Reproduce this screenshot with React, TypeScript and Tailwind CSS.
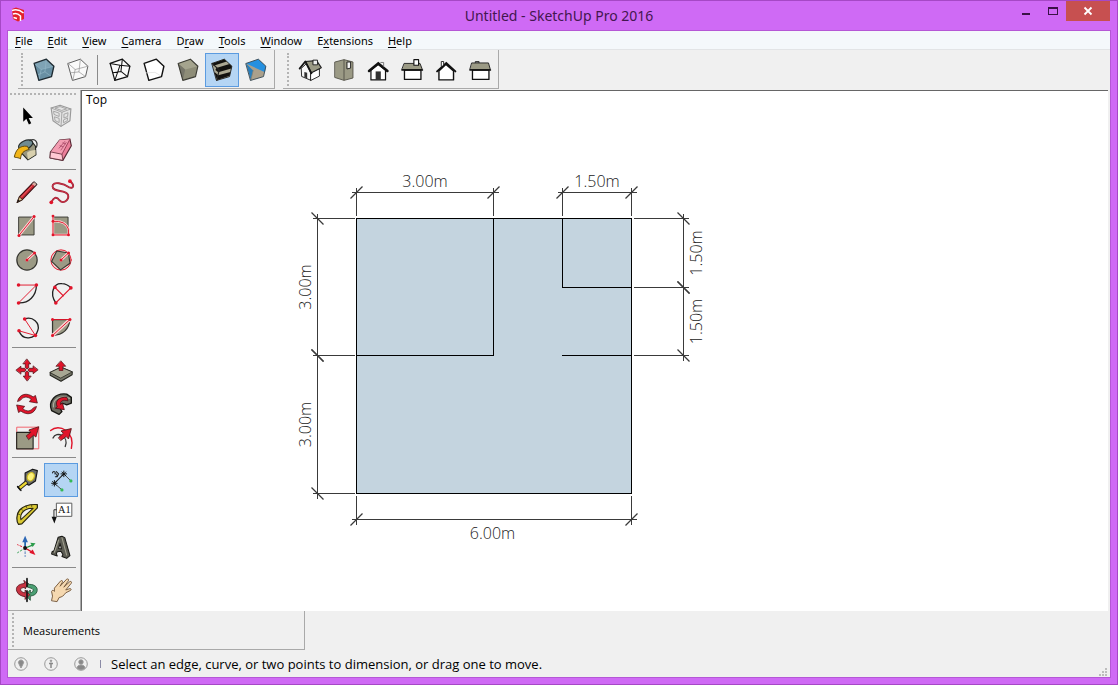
import React from "react";

const RED = "#e0142a";
const OLIVE = "#9b9a85";

function Svg({ children }: { children: React.ReactNode }) {
  return (
    <svg viewBox="0 0 34 34" className="size-full" fill="none" strokeLinejoin="round" strokeLinecap="round" aria-hidden="true">
      {children}
    </svg>
  );
}

function Tool({ label, active = false, children }: { label: string; active?: boolean; children: React.ReactNode }) {
  return (
    <button
      type="button"
      aria-label={label}
      aria-pressed={active}
      className={
        active
          ? "size-[34px] shrink-0 border border-[#5b9be0] bg-[#b5d5f4]"
          : "size-[34px] shrink-0 border border-transparent hover:bg-[#dcebf8]"
      }
    >
      <Svg>{children}</Svg>
    </button>
  );
}

const HULL = "M6.5 10 19.5 5.5 27.5 13 25 24 11.5 28Z";

function Dots({ points, r = 1.6 }: { points: number[][]; r?: number }) {
  return (
    <g fill={RED}>
      {points.map(([x, y]) => (
        <circle key={`${x}-${y}`} cx={x} cy={y} r={r} />
      ))}
    </g>
  );
}

const styleTools = {
  xray: (
    <>
      <path d={HULL} fill="#7fa3b5" />
      <path d="M6.5 10 14 16.500 27.500 13 25 24 11.500 28Z" fill="#688fa3" />
      <path d="M19.500 5.500 18 19 10.500 22M18 19l7 5M6.500 10 14 16.500 27.500 13M14 16.500 11.500 28" stroke="#93b5c5" strokeWidth="0.7" />
      <path d={HULL} stroke="#1e2a31" strokeWidth="1.4" />
    </>
  ),
  backEdges: (
    <>
      <path d={HULL} fill="#fafafa" stroke="#555" strokeWidth="1" />
      <path d="M6.500 10 14 16.500 27.500 13M14 16.500 11.500 28M19.500 5.500 18 19 9 20M18 19l7 5" stroke="#999" strokeWidth="0.8" />
    </>
  ),
  wireframe: (
    <>
      <path d={HULL} fill="#fafafa" stroke="#111" strokeWidth="1.300" />
      <path d="M6.500 10 17 12 27.500 13M17 12 11.500 28M19.500 5.500 18 18.500 9.500 20M18 18.500l7 5.500" stroke="#111" strokeWidth="1.100" />
    </>
  ),
  hidden: (
    <>
      <path d={HULL} fill="#fff" stroke="#111" strokeWidth="1.500" />
      <path d="M9 20 18 19.500 24 23" stroke="#ddd" strokeWidth="0.8" />
    </>
  ),
  shaded: (
    <>
      <path d={HULL} fill="#8e8d78" />
      <path d="M6.500 10 19.500 5.500 27.500 13 14 16.500Z" fill="#a5a48e" />
      <path d="M6.500 10 14 16.500 11.500 28Z" fill="#77766a" />
      <path d={HULL} stroke="#3d3d35" strokeWidth="1.200" />
    </>
  ),
  textured: (
    <>
      <path d={HULL} fill="#aaa792" />
      <path d="M6.500 10 19.500 5.500 22 8 8 12.500ZM11 15 25 10.500 27.500 13 26.800 15.500 13 19.500 10 17ZM9 19l4 3.500L26 19l-.8 4L12 27.500 10 23Z" fill="#12110f" />
      <path d="M6.500 10 14 17 11.500 28" stroke="#23221f" strokeWidth="1.200" />
      <path d={HULL} stroke="#23221f" strokeWidth="1" />
    </>
  ),
  mono: (
    <>
      <path d={HULL} fill="#aaa08c" />
      <path d="M6.500 10 19.500 5.500 27.500 13 26.500 19.500Z" fill="#2590e0" />
      <path d="M6.500 10 14 17.500 11.500 28Z" fill="#287fbe" />
      <path d="M14 17.500 11.500 28" stroke="#8b8270" strokeWidth="0.8" />
      <path d={HULL} stroke="#3b4d59" strokeWidth="1" />
    </>
  ),
};

const viewTools = {
  iso: (
    <>
      <path d="M8 15 13.500 10 18 21v7L8.500 24Z" fill="#f7f7f7" stroke="#222" />
      <path d="M18 20 27 15.500V23.500L18 28Z" fill="#fff" stroke="#222" />
      <path d="M12 8 24 7l5 7.500L18.500 20Z" fill={OLIVE} stroke="#222" strokeWidth="1.200" />
      <path d="M6 15.500 12 8l6.500 12.500" stroke="#151515" strokeWidth="1.900" />
      <path d="M20.500 6.500h4.500v5h-4.500z" fill="#eee" stroke="#222" />
      <path d="M11 19l3 1v6l-3-1.200z" fill="#333" />
    </>
  ),
  top: (
    <>
      <path d="M7.500 8.500 17 6l9.500 2.500v17L17 28l-9.500-3Z" fill={OLIVE} stroke="#55544a" />
      <path d="M17 6.500V27.500" stroke="#55544a" />
      <path d="M20.500 8.500h3.500v6.500l-3.500.8z" fill="#f4f4f4" stroke="#222" />
    </>
  ),
  front: (
    <>
      <path d="M9.500 17 17 11l8 6V27.500H9.500Z" fill="#fff" stroke="#111" strokeWidth="1.300" />
      <path d="M14.500 18.500h5.500V27.500h-5.500z" fill="#333" />
      <path d="M7.500 18 17.300 10 27 18" stroke="#111" strokeWidth="2.800" strokeLinejoin="miter" />
      <path d="M20 9h3v4" stroke="#777" />
    </>
  ),
  right: (
    <>
      <path d="M9 17h17.500v10H9z" fill="#fff" stroke="#111" strokeWidth="1.400" />
      <path d="M9 10h16.500L28 16.500H6.500Z" fill={OLIVE} stroke="#222" />
      <path d="M6.500 17H28" stroke="#111" strokeWidth="1.800" />
      <path d="M19 6h5v6h-5z" fill="#fff" stroke="#111" strokeWidth="1.200" />
    </>
  ),
  back: (
    <>
      <path d="M9.500 18 17 11l8 7V27.500H9.500Z" fill="#fff" stroke="#111" strokeWidth="1.500" />
      <path d="M7.500 18.500 17.300 9.500 27 18.500" stroke="#111" strokeWidth="2" strokeLinejoin="miter" />
      <path d="M12 13V8h2.500v3.500" fill="#fff" stroke="#222" />
    </>
  ),
  left: (
    <>
      <path d="M9 17h17.500v10H9z" fill="#fff" stroke="#111" strokeWidth="1.400" />
      <path d="M12 10V8h4v2" fill="#999" stroke="#333" />
      <path d="M8.500 9.500H26L28 16.500H6.500Z" fill={OLIVE} stroke="#222" />
      <path d="M6.500 17H28" stroke="#111" strokeWidth="1.800" />
    </>
  ),
};

const arrowUp = "M17 5.500l5 5.500h-3v4.500h-4V11h-3z";
const rotateArrow = "M7 14C9 6 17 4.500 23.500 9.500l2.500-1.500 2 8-8.500-1.500 2-2.500C17 8.500 13 9 10 13Z";
const freehandCurve = "M26.500 5.500C31 8.500 31.500 14 25.500 12C20 8 8 5 8 11C8 18 22 14 24.500 20C26 26 19 30 15.500 26C12 21 9 23 6.700 28";

type Item = { label: string; icon: React.ReactNode; active?: boolean };

const toolGroups: Item[][] = [
  [
    { label: "Select", icon: <path d="M13 8v15l3.300-3 2.700 6 2.500-1.200-2.700-5.600h4.500z" fill="#000" /> },
    {
      label: "Make Component",
      icon: (
        <>
          <path d="M6.500 8.500 16 5.500l11.500 4-1 12.500-9.500 6L8.500 22Z" fill="#e4e4e4" stroke="#999" strokeWidth="1.200" />
          <path d="M6.500 8.500 18 13l9.500-3.500M18 13l-1 15M9.500 12l5.500 2v3.500L10 15.500ZM10.500 18l4.500 1.500V24l-4-2ZM20.500 15l4-1.500-.5 4-3.500 1.500ZM20 21l4-2-.3 3L20 24ZM11 8.500l5-1.500 7 2.500-5 1.500Z" stroke="#9c9c9c" strokeWidth=".9" />
        </>
      ),
    },
    {
      label: "Paint Bucket",
      icon: (
        <>
          <path d="M12 10 21 6.500 26 13 26.500 22 18 27.500 11 20Z" fill="#98967f" stroke="#22251f" strokeWidth="1.200" />
          <path d="M17 20c2-2 6-3 9-3v5l-8 5Z" fill="#d8d0ae" />
          <ellipse cx="15.500" cy="11.500" rx="8" ry="4.500" transform="rotate(-24 15.500 11.500)" fill="#6f8b91" stroke="#242a2a" strokeWidth="1.200" />
          <path d="M20 7c6-3 9 2 7 7" stroke="#333" strokeWidth="1.300" />
          <path d="M17 13C9 12 5 17 3.500 24.500c3 .8 5 .5 6.500 2C11 20 13 18 19 16.500Z" fill="#f2b518" stroke="#5e4608" />
        </>
      ),
    },
    {
      label: "Eraser",
      icon: (
        <>
          <path d="M15.500 6.500 26.500 5.500 28 12.500 19 28 5.500 25.500 6 19Z" fill="#eb7f9a" stroke="#562833" strokeWidth="1.200" />
          <path d="M6 19 15.500 6.500l11-1L18 21.500Z" fill="#f39db2" />
          <path d="M6 19l12 2.500 1 6.500L5.500 25.500Z" fill="#ffc8d3" stroke="#562833" strokeWidth=".8" />
          <path d="M18 21.500 26.500 5.500" stroke="#963f58" />
          <path d="m15 15 6-7M17 17l5.500-8M16 12.500l3 1M19 9.500l2.500 1" stroke="#a34362" strokeWidth=".8" />
        </>
      ),
    },
  ],
  [
    {
      label: "Line",
      icon: (
        <>
          <path d="M6.500 28 9 22 24 6.500l3.500 2.500L12 25Z" fill="#c92531" stroke="#3a1215" strokeWidth="1.100" />
          <path d="M6.500 28 9 22l3 3Z" fill="#dfbf91" stroke="#3b261a" />
          <path d="M6.500 28 8 25l1.500 1.500Z" fill="#111" />
          <path d="M22 8.500 24.500 6l3 2.500-2 2.500" fill="#d9a9a0" stroke="#333" strokeWidth=".8" />
          <path d="M11 22.500 22.500 10.500" stroke="#ee6b6e" />
        </>
      ),
    },
    {
      label: "Freehand",
      icon: (
        <>
          <path d={freehandCurve} stroke="#981e32" strokeWidth="2" />
          <path d={freehandCurve} stroke="#e03a4d" strokeWidth=".8" />
          <Dots points={[[26.5, 5.5], [6.7, 28]]} r={2} />
        </>
      ),
    },
    {
      label: "Rectangle",
      icon: (
        <>
          <path d="M8.500 7.500h16v19h-16z" fill={OLIVE} stroke="#35352f" />
          <path d="M8.500 27 24.500 7" stroke="#fbd2d2" strokeWidth="3" />
          <path d="M8.500 27 24.500 7" stroke={RED} />
          <Dots points={[[8.5, 27], [24.500, 7]]} />
        </>
      ),
    },
    {
      label: "Rotated Rectangle",
      icon: (
        <>
          <path d="M8.500 7.500h16v19h-16z" fill={OLIVE} stroke="#35352f" />
          <path d="M8.500 7v19.500h16.500v-6Q22 11 8.500 12" stroke="#fbd2d2" strokeWidth="2.500" />
          <path d="M8.500 7v19.500h16.500v-6Q22 11 8.500 12" stroke={RED} />
          <Dots points={[[8.5, 6.500], [8.5, 12], [8.5, 26.500], [25, 26.500]]} r={1.500} />
        </>
      ),
    },
    {
      label: "Circle",
      icon: (
        <>
          <circle cx="17" cy="17" r="10.800" fill={OLIVE} stroke="#35352f" strokeWidth="1.300" />
          <path d="M17 17 25 9.500" stroke="#fbd2d2" strokeWidth="3" />
          <path d="M17 17 25 9.500" stroke={RED} />
          <Dots points={[[17, 17], [25, 9.500]]} />
        </>
      ),
    },
    {
      label: "Polygon",
      icon: (
        <>
          <circle cx="17" cy="17" r="10.800" fill="#efd1ce" stroke={RED} />
          <path d="M12.500 7.500 25 9.500 26.500 20.500 16.500 27.500 7 18.500Z" fill={OLIVE} stroke="#35352f" strokeWidth="1.200" />
          <path d="M17 17 25 9.500" stroke="#fbd2d2" strokeWidth="3" />
          <path d="M17 17 25 9.500" stroke={RED} />
          <Dots points={[[17, 17], [25, 9.500]]} />
        </>
      ),
    },
    {
      label: "Arc",
      icon: (
        <>
          <path d="M27 7.500C27 19 19 27 8 26.500" stroke="#222" strokeWidth="1.400" />
          <path d="M8 7.500H27L8 26.500" stroke={RED} />
          <Dots points={[[8, 7.500], [27, 7.500], [8, 26.500]]} r={1.900} />
        </>
      ),
    },
    {
      label: "2 Point Arc",
      icon: (
        <>
          <path d="M11.500 26.500C4 15 10 5 18 6c5 .2 8 3 9.500 4.500" stroke="#222" strokeWidth="1.400" />
          <path d="M11.500 26.500 27.500 10.500M10.500 10l9 9" stroke={RED} strokeWidth="1.300" />
          <Dots points={[[11.5, 26.500], [27.5, 10.500], [10.5, 10]]} r={1.900} />
        </>
      ),
    },
    {
      label: "3 Point Arc",
      icon: (
        <>
          <path d="M14.500 7.500C23 4 31 12 28.500 19.500 26 29 12 31 8.500 20" stroke="#222" strokeWidth="1.400" />
          <path d="M14.500 7.500 26 25 8.500 20" stroke={RED} />
          <Dots points={[[14.5, 7.500], [26, 25], [8.5, 20]]} r={1.900} />
        </>
      ),
    },
    {
      label: "Pie",
      icon: (
        <>
          <path d="M8 8h18.500Q25 24 8 25Z" fill={OLIVE} stroke="#35352f" strokeWidth="1.300" />
          <path d="M26.500 8 8 25" stroke="#fbd2d2" strokeWidth="3.500" />
          <path d="M8 8h18.500L8 25" stroke={RED} />
          <Dots points={[[8, 8], [26.5, 8], [8, 25]]} />
        </>
      ),
    },
  ],
  [
    {
      label: "Move",
      icon: (
        <g fill={RED} stroke="#4e1015" strokeWidth=".8">
          {[0, 90, 180, 270].map((a) => (
            <path key={a} transform={`rotate(${a} 17 17)`} d="M17 5.500l4 5h-2.200v4L17 16l-1.800-1.500v-4H13z" />
          ))}
        </g>
      ),
    },
    {
      label: "Push/Pull",
      icon: (
        <>
          <path d="M5.500 19.500 17 14l12 5-.2 3L17 29 5.500 22.500Z" fill="#77786a" stroke="#25251f" strokeWidth="1.100" />
          <path d="M5.500 19.500 17 14l12 5-12 6.500Z" fill="#a7a793" stroke="#25251f" strokeWidth=".8" />
          <path d={arrowUp} transform="translate(0 2)" fill={RED} stroke="#5a1518" strokeWidth=".8" />
        </>
      ),
    },
    {
      label: "Rotate",
      icon: (
        <g fill={RED} stroke="#4e1015" strokeWidth=".8">
          <path d={rotateArrow} />
          <path d={rotateArrow} transform="rotate(180 17 17)" />
        </g>
      ),
    },
    {
      label: "Follow Me",
      icon: (
        <>
          <path d="M7 24C3 14 11 5 23 6.500l5 3.500v6l-5 2C16 14 14 19 18 25l-3 3Z" fill="#6b6b60" stroke="#171713" strokeWidth="1.400" />
          <path d="M9 20C8 12 16 7 26 11" stroke="#b0afa0" strokeWidth="1.200" />
          <path d="M23 10C15 9 10 14 13 20l-2 1.500 9.500 1.500-2-7-2 1.500C16 14 19 12 24 13.500Z" fill={RED} stroke="#531217" strokeWidth=".9" />
        </>
      ),
    },
    {
      label: "Scale",
      icon: (
        <>
          <path d="M6.500 5.500h23v23h-23z" stroke="#f25d66" />
          <path d="M6 11h17.500v17.500H6z" fill={OLIVE} stroke="#24241f" strokeWidth="1.200" />
          <path d="M16.500 14.500 21 11l-2-2.500L29.500 5l-3 11-2.500-2-5 4.500Z" fill={RED} stroke="#5a1518" strokeWidth=".9" />
        </>
      ),
    },
    {
      label: "Offset",
      icon: (
        <>
          <path d="M6 9C15 1 32 10 28 28" stroke={RED} strokeWidth="1.500" />
          <path d="M8.500 17C12 9 26 15 21.500 26" stroke="#333" strokeWidth="1.400" />
          <path d="M14.500 16.500 19.500 12l-2.500-2.500L28 7l-3 11-2.500-2.500-5.500 4Z" fill={RED} stroke="#4d1517" strokeWidth=".9" />
        </>
      ),
    },
  ],
  [
    {
      label: "Tape Measure",
      icon: (
        <>
          <path d="M15 9.500 23 5.500l5 1.500-2 11-7 4.500-4-2Z" fill="#6b6b66" stroke="#151515" strokeWidth="1.200" />
          <ellipse cx="21" cy="13.500" rx="3.600" ry="4.600" transform="rotate(24 21 13.500)" fill="#fdf07b" stroke="#cfbc24" strokeWidth="1.300" />
          <path d="m17 19-9 7.500" stroke="#222" strokeWidth="4.500" strokeLinecap="butt" />
          <path d="m16.500 19.500-8 6.500" stroke="#eed831" strokeWidth="2.500" strokeLinecap="butt" />
          <path d="m7 24 3.500 4" stroke="#111" strokeWidth="1.600" />
        </>
      ),
    },
    {
      label: "Dimensions",
      active: true,
      icon: (
        <>
          <path d="m10 20.500 10-10" stroke="#222" strokeWidth="1.100" />
          <path d="m10 20.500 8 7M20 10.500l7.500 7.500" stroke="#444" strokeWidth="1" />
          <path d="M7 20.500h6M10 17.500v6M8 18.500l4 4M12 18.500l-4 4M17 10.500h6M20 7.500v6M18 8.500l4 4M22 8.500l-4 4" stroke="#111" strokeWidth="1" />
          <path d="M8 9.500c.5-2.500 4-1.500 2.500 1 3-.5 3 3.500.5 3M12 8l2.500 2.500-1.500 3" stroke="#222" strokeWidth="1.100" />
          <g fill="#35b956"><circle cx="18" cy="27.500" r="1.700" /><circle cx="27.500" cy="18" r="1.700" /></g>
        </>
      ),
    },
    {
      label: "Protractor",
      icon: (
        <>
          <path d="M8 28C5.500 25 5.500 17 9 13 13.500 8 20 6.500 28 7v3.500L11.500 27.500Z" fill="#d9c833" stroke="#29260f" strokeWidth="1.300" />
          <path d="M10.500 23C9.500 18 12 14.500 15.500 12.500c2.500-1.200 5-1.500 8-1.500Z" fill="#f0f0f0" stroke="#29260f" strokeWidth="1.100" />
          <path d="m7.500 17 1.500.5M11 11.500l1 1.500M16 8.500l.5 1.500M22 7.500v1.500" stroke="#302b11" strokeWidth=".8" />
        </>
      ),
    },
    {
      label: "Text",
      icon: (
        <>
          <path d="M12.500 5.500h16v14h-16z" fill="#fff" stroke="#555" />
          <path d="M12 12.500H9.500V20" stroke="#222" />
          <path d="m7 20 3 7 2.500-7Z" fill="#111" />
          <text x="20.500" y="16" textAnchor="middle" fontSize="11" fontFamily="Liberation Serif, serif" fill="#111">A1</text>
        </>
      ),
    },
    {
      label: "Axes",
      icon: (
        <>
          <path d="M15 17v9" stroke="#4c78b8" strokeDasharray="2 2" />
          <path d="m15 17-8 5" stroke="#38a058" strokeDasharray="2 2" />
          <path d="m15 17-8-3.500" stroke={RED} strokeDasharray="2 2" />
          <path d="M15 17V9" stroke="#1c63ac" strokeWidth="1.800" />
          <path d="m12 11 3-7 3 7Z" fill="#2c67b5" />
          <path d="m15 17 8-3" stroke="#218f43" strokeWidth="1.300" />
          <path d="m20.500 11.500 5.500.5-3 4Z" fill="#2b9c4a" />
          <path d="m15 17 7 4" stroke={RED} strokeWidth="1.500" />
          <path d="m19.500 22 6.500 2.500-3-6Z" fill={RED} />
          <circle cx="15" cy="17" r="2" fill="#111" />
        </>
      ),
    },
    {
      label: "3D Text",
      icon: (
        <>
          <path d="M14 5.500 18 4.500 21 6 26.500 25l-3.500 3-5-2 1-2-2-3.500-4 .5-1 2 1 2.500-6-2 .5-2.500 2-1ZM16 12l-1.500 5.500 3 .5Z" fill="#5c5c53" fillRule="evenodd" stroke="#191915" strokeWidth="1.100" />
          <path d="m18 6 5 18.500M14.500 8.500l-4.500 13" stroke="#a2a190" strokeWidth="1.100" />
        </>
      ),
    },
  ],
  [
    {
      label: "Orbit",
      icon: (
        <>
          <path d="M20 11c6 0 9 4 7.500 8-1 3-4 4-7 4.500V28l-5-6 5-5v3c3-.5 4-3 2-4.500l-6-2V9Z" fill="#4b9f73" stroke="#214f35" strokeWidth=".9" />
          <path d="M14 10C7 11 5 14 6 18c1 4 6 6 9 6v3l5-5-5-5v3c-4-.5-6-3-4-5l4-1v2l3-5-4-4Z" fill="#c83342" stroke="#5c1920" strokeWidth=".9" />
          <path d="M17 5v8M17 18v11" stroke="#151515" strokeWidth="1.800" />
        </>
      ),
    },
    {
      label: "Pan",
      icon: (
        <path d="M7 28 8 23.500 7 18.500c.5-1.500 2-1.500 3 0V15L16.500 7.500c1.500-1.200 2.500-.3 2 1.200L16 13l7-7.500c1.500-.8 2.700.3 1.800 1.800L20 14l6.500-6c1.500-.5 2.200.8 1.300 2L22 17l4.500-1.500c1.500 0 1.700 1.500.5 2l-5 2.500c-2 3-4 4.500-7 5l-2 4Z" fill="#f5d8b0" stroke="#75583a" strokeWidth="1" />
      ),
    },
  ],
];

const menus: [string, string, string][] = [
  ["", "F", "ile"],
  ["", "E", "dit"],
  ["", "V", "iew"],
  ["", "C", "amera"],
  ["D", "r", "aw"],
  ["", "T", "ools"],
  ["", "W", "indow"],
  ["E", "x", "tensions"],
  ["", "H", "elp"],
];

function Grip({ horizontal = false }: { horizontal?: boolean }) {
  return horizontal ? (
    <div className="mx-[2px] border-t-2 border-dotted border-[#b4b4b4]" />
  ) : (
    <div className="my-[2px] self-stretch border-l-2 border-dotted border-[#b4b4b4]" />
  );
}

function Dimension({
  length,
  reach,
  label,
  transform,
  textX = length / 2,
  textY,
  overshoot = 5,
}: {
  length: number;
  reach: number;
  label: string;
  transform: string;
  textX?: number;
  textY: number;
  overshoot?: number;
}) {
  const dir = Math.sign(reach);
  return (
    <g transform={transform}>
      <path
        d={`M${-overshoot} 0H${length + overshoot}M0 ${-dir * 5}V${reach}M${length} ${-dir * 5}V${reach}`}
        stroke="#3a3a3a"
        shapeRendering="crispEdges"
      />
      <path d={`M-6 6 6 -6M${length - 6} 6 ${length + 6} -6`} stroke="#3a3a3a" strokeWidth="1.300" />
      <text x={textX} y={textY} textAnchor="middle" className="fill-[#222] text-[16px] font-light">
        {label}
      </text>
    </g>
  );
}

function Drawing() {
  return (
    <svg className="block size-full" fill="none" role="img" aria-label="Dimensioned plan">
      <g transform="translate(274.5 127.5)">
        <rect width="275" height="275" fill="#c4d4df" />
        <path
          d="M0 0H275V275H0ZM137 0V137H0M206 0V69H275M205 137H275"
          stroke="#000"
          shapeRendering="crispEdges"
        />
        <Dimension length={137} reach={23} label="3.00m" transform="translate(0 -26)" textY={-6} />
        <Dimension length={69} reach={23} label="1.50m" transform="translate(206 -26)" textY={-6} />
        <Dimension length={275} reach={-24} label="6.00m" transform="translate(0 301)" textX={136} textY={19} />
        <Dimension length={138} reach={37} label="3.00m" transform="translate(-39 275) rotate(-90)" textY={-7} />
        <Dimension length={137} reach={37} label="3.00m" transform="translate(-39 137) rotate(-90)" textY={-7} />
        <Dimension length={68} reach={-50} label="1.50m" transform="translate(327 137) rotate(-90)" textY={18} />
        <Dimension length={69} reach={-50} label="1.50m" transform="translate(327 69) rotate(-90)" textY={18} />
      </g>
    </svg>
  );
}

export default function App() {
  return (
    <div className="flex h-screen flex-col border border-[#a648c6] bg-[#cf6af5] px-[7px] pb-[7px] font-['Noto_Sans','Open_Sans',sans-serif] text-[11px] text-black">
      <header className="grid h-[30px] shrink-0 grid-cols-[1fr_auto_1fr] items-start">
        <svg viewBox="0 0 14 15" className="mt-[6px] ml-[3px] h-[15px] w-[14px]" aria-hidden="true">
          <path d="M1 2 5 .5 13 3v9l-6 2.500L2 12Z" fill="#e3222b" />
          <path d="M1 3.500C5 2 9 3 12.500 6M2 7c3-1 5-.5 7.500 2v5M2.500 10.500 6 11.500" fill="none" stroke="#fff" strokeWidth="1.500" />
        </svg>
        <h1 className="pt-[3px] text-[14px] leading-[24px] text-[#43164f]">Untitled - SketchUp Pro 2016</h1>
        <div className="flex justify-end text-[#3a1246]">
          <button type="button" aria-label="Minimize" className="flex h-5 w-7 items-center justify-center">
            <svg viewBox="0 0 10 10" className="size-[10px]"><path d="M1 7h8v2H1z" fill="currentColor" /></svg>
          </button>
          <button type="button" aria-label="Maximize" className="flex h-5 w-[26px] items-center justify-center">
            <svg viewBox="0 0 10 10" className="size-[10px]"><path d="M0 1h10v8H0zM1 3v5h8V3z" fillRule="evenodd" fill="currentColor" /></svg>
          </button>
          <button type="button" aria-label="Close" className="flex h-5 w-11 items-center justify-center bg-[#c75050] text-white">
            <svg viewBox="0 0 10 10" className="size-[10px]"><path d="m1.500 1.500 7 7m0-7-7 7" stroke="currentColor" strokeWidth="1.800" /></svg>
          </button>
        </div>
      </header>

      <div className="flex min-h-0 flex-1 flex-col bg-[#f0f0f0] outline outline-[#b557d6]">
        <nav className="flex h-[19px] shrink-0 items-end gap-[15px] border-b border-[#e2e4e6] bg-[#f4f8fb] pl-[7px]">
          {menus.map(([before, key, after]) => (
            <button key={before + key + after} type="button" className="leading-[16px]">
              {before}
              <span className="underline underline-offset-2">{key}</span>
              {after}
            </button>
          ))}
        </nav>

        <div className="flex h-10 shrink-0 items-start">
          <div className="ml-[10px] flex h-[39px] items-center border-r border-b border-[#a9a9a9] pt-px pl-[3px]">
            <Grip />
            <div className="ml-1 flex items-center pr-px">
              <Tool label="X-Ray">{styleTools.xray}</Tool>
              <Tool label="Back Edges">{styleTools.backEdges}</Tool>
              <div className="mr-[5px] ml-[2px] h-[30px] w-px bg-[#8a8a8a]" />
              <Tool label="Wireframe">{styleTools.wireframe}</Tool>
              <Tool label="Hidden Line">{styleTools.hidden}</Tool>
              <Tool label="Shaded">{styleTools.shaded}</Tool>
              <Tool label="Shaded With Textures" active>{styleTools.textured}</Tool>
              <Tool label="Monochrome">{styleTools.mono}</Tool>
            </div>
          </div>
          <div className="ml-2 flex h-[39px] items-center border-r border-b border-[#a9a9a9] pt-px pl-1">
            <Grip />
            <div className="ml-1 flex items-center pr-px">
              <Tool label="Iso">{viewTools.iso}</Tool>
              <Tool label="Top">{viewTools.top}</Tool>
              <Tool label="Front">{viewTools.front}</Tool>
              <Tool label="Right">{viewTools.right}</Tool>
              <Tool label="Back">{viewTools.back}</Tool>
              <Tool label="Left">{viewTools.left}</Tool>
            </div>
          </div>
        </div>

        <div className="flex min-h-0 flex-1">
          <aside className="flex w-[73px] shrink-0 flex-col border-r border-b border-[#a9a9a9] pt-[3px] pr-[2px]">
            <Grip horizontal />
            <div className="mt-1 flex flex-col pl-[2px]">
              {toolGroups.map((group, i) => (
                <div key={group[0].label}>
                  {i > 0 && <div className="mx-[2px] mt-[2px] mb-[5px] h-px bg-[#8a8a8a]" />}
                  <div className="grid grid-cols-[34px_34px]">
                    {group.map((t) => (
                      <Tool key={t.label} label={t.label} active={t.active}>
                        {t.icon}
                      </Tool>
                    ))}
                  </div>
                </div>
              ))}
            </div>
          </aside>
          <main className="relative mr-[2px] min-w-0 flex-1 border-t border-l border-[#666] bg-white font-['Open_Sans',sans-serif]">
            <p className="absolute top-0 left-1 text-[12px] leading-[17px]">Top</p>
            <Drawing />
          </main>
        </div>

        <div className="flex h-[39px] w-[297px] shrink-0 items-center border-r border-b border-[#a9a9a9] pl-1">
          <Grip />
          <label htmlFor="measurements" className="ml-[9px] pt-[2px] font-['Open_Sans',sans-serif]">Measurements</label>
          <input id="measurements" type="text" className="mr-1 ml-auto h-5 w-[150px] bg-transparent px-1 outline-none" />
        </div>

        <footer className="flex h-[27px] shrink-0 items-center pl-[6px]">
          <div className="flex items-center gap-4">
            <svg viewBox="0 0 14 14" className="size-[14px]" fill="none" stroke="#999" aria-hidden="true">
              <circle cx="7" cy="7" r="6.300" /><path d="M7 11 5 7a2.500 2.500 0 1 1 4 0Z" fill="#8a8a8a" />
            </svg>
            <svg viewBox="0 0 14 14" className="size-[14px]" fill="none" stroke="#999" aria-hidden="true">
              <circle cx="7" cy="7" r="6.300" /><path d="M7 5.500V11M5 6.500h4" stroke="#888" strokeWidth="1.500" /><circle cx="7" cy="3.800" r=".8" fill="#888" />
            </svg>
            <svg viewBox="0 0 14 14" className="size-[14px]" fill="none" stroke="#999" aria-hidden="true">
              <circle cx="7" cy="7" r="6.300" /><circle cx="7" cy="5" r="2.200" fill="#888" /><path d="M3 11c0-4 8-4 8 0-2 2-6 2-8 0Z" fill="#888" />
            </svg>
          </div>
          <div className="ml-3 h-2 w-px bg-[#8b8ba6]" />
          <p className="ml-[10px] pt-[2px] font-['Open_Sans',sans-serif] text-[13px]">Select an edge, curve, or two points to dimension, or drag one to move.</p>
          <svg viewBox="0 0 10 10" className="mr-[2px] ml-auto size-[10px] self-end" fill="#bdbdbd" aria-hidden="true">
            <path d="M7 1h2v2H7zM4 4h2v2H4zM7 4h2v2H7zM1 7h2v2H1zM4 7h2v2H4zM7 7h2v2H7z" />
          </svg>
        </footer>
      </div>
    </div>
  );
}
